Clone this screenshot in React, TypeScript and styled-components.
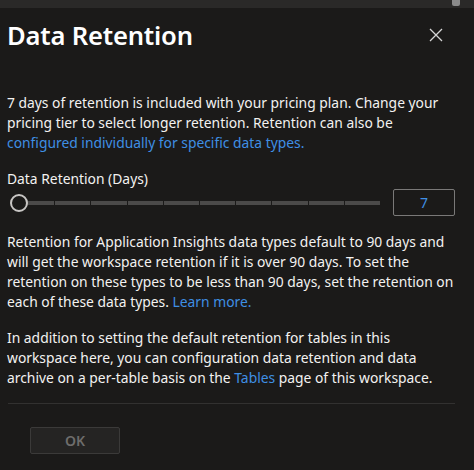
import React from 'react';
import styled, { createGlobalStyle } from 'styled-components';

const GlobalStyle = createGlobalStyle`
  html, body {
    margin: 0;
    padding: 0;
    background: #1b1a19;
  }
  body {
    font-family: "Noto Sans", "Open Sans", sans-serif;
    color: #f3f2f1;
  }
`;

const TICKS = 10;

function App() {
  return (
    <>
      <GlobalStyle />
      <Page>
        <TopStrip>
          <ScrollNub />
        </TopStrip>
        <Dialog>
          <Header>
            <Title>Data Retention</Title>
            <CloseBtn aria-label="Close">
              <svg width="14" height="14" viewBox="0 0 14 14">
                <path d="M1 1 L13 13 M13 1 L1 13" stroke="#d6d6d6" strokeWidth="1.3" fill="none" />
              </svg>
            </CloseBtn>
          </Header>
          <Body>
            <Paragraph>
              7 days of retention is included with your pricing plan. Change your
              <br />
              pricing tier to select longer retention. Retention can also be
              <br />
              <Link href="#">configured individually for specific data types.</Link>
            </Paragraph>

            <Field>
              <Label>Data Retention (Days)</Label>
              <SliderRow>
                <Slider>
                  <Track>
                    {Array.from({ length: TICKS }).map((_, i) => (
                      <Segment key={i} />
                    ))}
                  </Track>
                  <Thumb />
                </Slider>
                <ValueBox>7</ValueBox>
              </SliderRow>
            </Field>

            <Paragraph>
              Retention for Application Insights data types default to 90 days and
              <br />
              will get the workspace retention if it is over 90 days. To set the
              <br />
              retention on these types to be less than 90 days, set the retention on
              <br />
              each of these data types. <Link href="#">Learn more.</Link>
            </Paragraph>

            <Paragraph>
              In addition to setting the default retention for tables in this
              <br />
              workspace here, you can configuration data retention and data
              <br />
              archive on a per-table basis on the <Link href="#">Tables</Link> page of this workspace.
            </Paragraph>
          </Body>
          <Divider />
          <Footer>
            <OkButton disabled>OK</OkButton>
          </Footer>
        </Dialog>
      </Page>
    </>
  );
}

const Page = styled.div`
  width: 474px;
  height: 470px;
  overflow: hidden;
  display: flex;
  flex-direction: column;
`;
const TopStrip = styled.div`
  height: 8px;
  background: #2a2928;
  position: relative;
`;
const ScrollNub = styled.div`
  position: absolute;
  right: 14px;
  top: 0;
  width: 8px;
  height: 6px;
  border-radius: 0 0 2px 2px;
  background: #8a8a8a;
`;
const Dialog = styled.div`
  flex: 1;
  display: flex;
  flex-direction: column;
  padding: 0 19px 0 7px;
`;
const Header = styled.div`
  display: flex;
  justify-content: space-between;
  align-items: center;
  height: 54px;
  margin-bottom: 31px;
`;
const Title = styled.h1`
  margin: 0;
  font-size: 25.6px;
  font-weight: 600;
  letter-spacing: -0.2px;
  color: #ffffff;
`;
const CloseBtn = styled.button`
  background: none;
  border: none;
  padding: 0;
  margin-right: 12px;
  display: flex;
  cursor: pointer;
`;
const Body = styled.div`
  display: flex;
  flex-direction: column;
  gap: 16px;
`;
const Paragraph = styled.p`
  margin: 0;
  font-size: 13.85px;
  line-height: 20px;
  white-space: nowrap;
`;
const Link = styled.a`
  color: #3f8fe4;
  text-decoration: none;
`;
const Field = styled.div`
  display: flex;
  flex-direction: column;
`;
const Label = styled.div`
  font-size: 13.85px;
  line-height: 20px;
`;
const SliderRow = styled.div`
  display: flex;
  align-items: center;
  gap: 13px;
`;
const Slider = styled.div`
  flex: 1;
  position: relative;
  display: flex;
  align-items: center;
  height: 27px;
  padding-left: 12px;
`;
const Track = styled.div`
  flex: 1;
  display: flex;
  gap: 1px;
  height: 4px;
`;
const Segment = styled.div`
  flex: 1;
  background: #4b4a49;
`;
const Thumb = styled.div`
  position: absolute;
  left: 3px;
  top: 50%;
  transform: translateY(-50%);
  width: 14px;
  height: 14px;
  border: 2px solid #c8c6c4;
  border-radius: 50%;
  background: #1b1a19;
`;
const ValueBox = styled.div`
  width: 60px;
  height: 25px;
  border: 1px solid #7a7978;
  border-radius: 2px;
  display: flex;
  align-items: center;
  justify-content: center;
  color: #3f8fe4;
  font-size: 14px;
`;
const Divider = styled.div`
  height: 1px;
  background: #323130;
  margin: 15px 0 23px 1px;
`;
const Footer = styled.div`
  display: flex;
  padding-left: 23px;
`;
const OkButton = styled.button`
  width: 90px;
  height: 27px;
  border: 1px solid #3b3a39;
  border-radius: 2px;
  background: #252423;
  color: #6e6d6c;
  font-family: inherit;
  font-size: 14px;
  font-weight: 600;
`;

export default App;
